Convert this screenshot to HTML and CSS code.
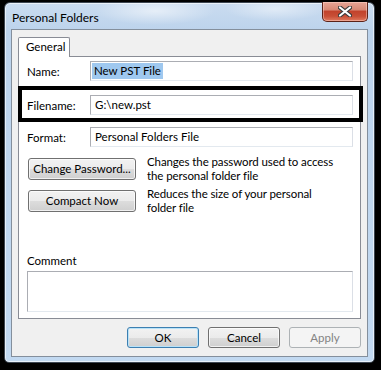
FILE: index.html
```html
<!DOCTYPE html>
<html>
<head>
<meta charset="utf-8">
<link rel="stylesheet" href="styles.css">
</head>
<body>
<div class="window">
  <div class="titlebar">
    <span class="title">Personal Folders</span>
    <div class="close">
      <svg width="14" height="11" viewBox="0 0 14 11">
        <path d="M2 1.5 L12 9.5 M12 1.5 L2 9.5" stroke="#3b3b3b" stroke-width="4.2" stroke-linecap="round"/>
        <path d="M2 1.5 L12 9.5 M12 1.5 L2 9.5" stroke="#ffffff" stroke-width="2.2" stroke-linecap="round"/>
      </svg>
    </div>
  </div>
  <div class="client">
    <div class="tabs"><div class="tab">General</div></div>
    <div class="panel">
      <div class="field f-name">
        <span class="label">Name:</span>
        <div class="input"><span class="sel">New PST File</span></div>
      </div>
      <div class="field f-file">
        <span class="label">Filename:</span>
        <div class="input">G:\new.pst</div>
        <div class="annot"></div>
      </div>
      <div class="field f-format">
        <span class="label">Format:</span>
        <div class="input">Personal Folders File</div>
      </div>
      <div class="action a-first">
        <div class="btn wide">Change Password...</div>
        <div class="desc">Changes the password used to access<br>the personal folder file</div>
      </div>
      <div class="action a-second">
        <div class="btn wide">Compact Now</div>
        <div class="desc">Reduces the size of your personal<br>folder file</div>
      </div>
      <div class="comment-label">Comment</div>
      <div class="comment-box"></div>
    </div>
    <div class="buttons">
      <div class="btn dlg default">OK</div>
      <div class="btn dlg">Cancel</div>
      <div class="btn dlg disabled">Apply</div>
    </div>
  </div>
</div>
</body>
</html>
```
FILE: styles.css
```css
html, body {
  margin: 0;
  padding: 0;
}
body {
  background: #000;
  width: 381px;
  height: 370px;
  overflow: hidden;
  font-family: Lato, "Noto Sans", sans-serif;
  font-size: 11.5px;
  color: #000;
}
.window {
  box-sizing: border-box;
  margin: 2px 0 0 4px;
  width: 371px;
  height: 361px;
  border: 1px solid #3c4652;
  border-radius: 6px 6px 5px 5px;
  background:
    radial-gradient(ellipse 60px 14px at 150px 8px, rgba(255,255,255,0.55), rgba(255,255,255,0)),
    radial-gradient(ellipse 50px 12px at 270px 6px, rgba(255,255,255,0.45), rgba(255,255,255,0)),
    linear-gradient(to bottom, #cadcf0 0px, #bcd3ec 28px, #c2d9f1 100%);
  box-shadow: inset 0 0 0 1px rgba(255,255,255,0.6);
  padding: 0 6px 5px 6px;
  display: flex;
  flex-direction: column;
}
.titlebar {
  height: 27px;
  display: flex;
  align-items: flex-start;
}
.title {
  padding: 7px 0 0 1px;
  line-height: 16px;
  font-size: 12px;
  color: #000;
}
.close {
  margin-left: auto;
  margin-top: -1px;
  width: 46px;
  height: 20px;
  box-sizing: border-box;
  border: 1px solid #5b2218;
  border-top: none;
  border-radius: 0 0 5px 5px;
  background: linear-gradient(to bottom, #e7a596 0%, #d88976 40%, #c2432c 50%, #c84f36 75%, #e07a5f 100%);
  box-shadow: inset 0 0 0 1px rgba(255,220,210,0.45);
  display: flex;
  align-items: center;
  justify-content: center;
}
.client {
  flex: 1;
  box-sizing: border-box;
  border: 1px solid #848f9c;
  background: #f0f0f0;
  padding: 7px 6px 8px 6px;
  display: flex;
  flex-direction: column;
}
.tabs {
  display: flex;
  position: relative;
  z-index: 1;
  margin-bottom: -1px;
}
.tab {
  box-sizing: border-box;
  width: 52px;
  height: 20px;
  border: 1px solid #898c95;
  border-bottom: none;
  border-radius: 2px 2px 0 0;
  background: #fff;
  line-height: 18px;
  padding-left: 7px;
}
.panel {
  position: relative;
  box-sizing: border-box;
  height: 263px;
  border: 1px solid #898c95;
  background: #fff;
  padding: 4px 7px 0 8px;
}
.field {
  position: relative;
  display: flex;
  align-items: center;
  height: 20px;
}
.f-file { margin-top: 14px; }
.f-format { margin-top: 12px; }
.label {
  width: 63px;
  flex: none;
}
.input {
  flex: 1;
  box-sizing: border-box;
  height: 20px;
  border: 1px solid #abadb3;
  border-right-color: #dbdfe6;
  border-bottom-color: #e3e9ef;
  background: #fff;
  padding-left: 4px;
  line-height: 17px;
  white-space: nowrap;
}
.f-name .input { padding-left: 1px; }
.sel {
  background: #9fc8ef;
  display: inline-block;
  height: 16px;
  line-height: 16px;
  padding: 0 2px;
}
.annot {
  position: absolute;
  left: -9px;
  top: -9px;
  width: 345px;
  height: 36px;
  box-sizing: border-box;
  border: 4px solid #000;
}
.action {
  display: flex;
  align-items: center;
  height: 26px;
}
.a-first { margin-top: 9px; }
.a-second { margin-top: 6px; }
.btn {
  box-sizing: border-box;
  border: 1px solid #707070;
  border-radius: 3px;
  background: linear-gradient(to bottom, #f2f2f2 0%, #ebebeb 50%, #dddddd 50%, #cfcfcf 100%);
  box-shadow: inset 0 0 0 1px rgba(255,255,255,0.7);
  text-align: center;
  white-space: nowrap;
}
.wide {
  width: 108px;
  height: 22px;
  line-height: 20px;
  margin-left: 1px;
  flex: none;
}
.desc {
  margin-left: 11px;
  line-height: 14px;
  white-space: nowrap;
  letter-spacing: -0.1px;
}
.comment-label {
  margin-top: 39px;
  line-height: 16px;
}
.comment-box {
  margin-top: 2px;
  height: 41px;
  box-sizing: border-box;
  border: 1px solid #abadb3;
  border-right-color: #dbdfe6;
  border-bottom-color: #e3e9ef;
  background: #fff;
}
.buttons {
  margin-top: 8px;
  display: flex;
  justify-content: flex-end;
  gap: 9px;
}
.dlg {
  width: 72px;
  height: 21px;
  line-height: 19px;
}
.default {
  border-color: #3c7fb1;
  box-shadow: inset 0 0 0 1px #b8e2f8;
}
.disabled {
  border-color: #adb2b5;
  background: #f4f4f4;
  box-shadow: none;
  color: #838383;
}
```
